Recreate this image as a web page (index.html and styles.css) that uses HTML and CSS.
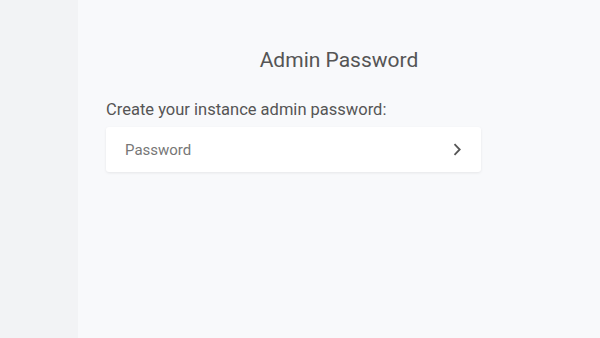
FILE: index.html
```html
<!DOCTYPE html>
<html lang="en">
<head>
    <meta charset="UTF-8" />
    <title>Admin Password</title>
    <link rel="stylesheet" href="styles.css">
</head>
<body>
    <div class="layout">
        <aside class="sidebar"></aside>
        <main class="content">
            <h2 class="title">Admin Password</h2>
            <div class="form-block">
                <label class="label" for="pw">Create your instance admin password:</label>
                <div class="field">
                    <input type="password" id="pw" placeholder="Password" />
                    <svg class="chevron" width="9" height="13" viewBox="0 0 9 13">
                        <path d="M1.5 1.2 L6.7 6.5 L1.5 11.8" fill="none" stroke="#555" stroke-width="1.8" />
                    </svg>
                </div>
            </div>
        </main>
    </div>
</body>
</html>
```

FILE: styles.css
```css
body {
    margin: 0;
    height: 100vh;
    overflow: hidden;
    font-family: Roboto, "Liberation Sans", sans-serif;
    background-color: #f8f9fb;
}
.layout {
    display: flex;
    height: 100vh;
}
.sidebar {
    width: 78px;
    flex-shrink: 0;
    background-color: #f2f3f5;
}
.content {
    flex-grow: 1;
    display: flex;
    flex-direction: column;
}
.title {
    margin: 48px 0 0 0;
    text-align: center;
    font-size: 21px;
    line-height: 24px;
    font-weight: 400;
    color: #555;
}
.form-block {
    margin: 28px 0 0 28px;
    width: 375px;
}
.label {
    display: block;
    font-size: 16.5px;
    line-height: 20px;
    color: #555;
}
.field {
    margin-top: 7px;
    height: 45px;
    box-sizing: border-box;
    background: #fff;
    border-radius: 3px;
    box-shadow: 0 1px 3px rgba(0,0,0,0.08);
    display: flex;
    align-items: center;
    padding: 0 19px 0 19px;
}
.field input {
    flex-grow: 1;
    border: none;
    outline: none;
    background: transparent;
    font-family: inherit;
    font-size: 15px;
    color: #555;
    padding: 0;
}
.field input::placeholder {
    color: #777;
}
```
